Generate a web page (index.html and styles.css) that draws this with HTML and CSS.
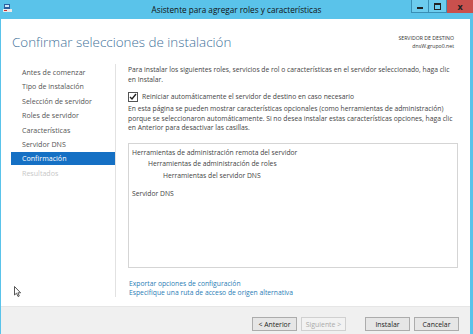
FILE: index.html
```html
<!DOCTYPE html>
<html lang="es">
<head>
    <meta charset="UTF-8">
    <title>Asistente para agregar roles y características</title>
    <link rel="stylesheet" href="styles.css">
</head>
<body>
    <div class="window">
        <div class="titlebar">
            <svg class="app-icon" width="9" height="10" viewBox="0 0 9 10">
                <rect x="1" y="1" width="6" height="6" fill="#2a5f9e"/>
                <rect x="2" y="2" width="4" height="2" fill="#cfe6f7"/>
                <rect x="0" y="6" width="9" height="3" fill="#e9e9e9"/>
                <rect x="1" y="7" width="3" height="1" fill="#c33"/>
            </svg>
            <div class="title">Asistente para agregar roles y características</div>
            <div class="controls">
                <div class="ctl ctl-min"><span></span></div>
                <div class="ctl ctl-max"><span></span></div>
                <div class="ctl ctl-close">x</div>
            </div>
        </div>

        <div class="header">
            <h1>Confirmar selecciones de instalación</h1>
            <div class="target">
                <div>SERVIDOR DE DESTINO</div>
                <div>dnsW.grupo0.net</div>
            </div>
        </div>

        <div class="main">
            <ul class="nav">
                <li>Antes de comenzar</li>
                <li>Tipo de instalación</li>
                <li>Selección de servidor</li>
                <li>Roles de servidor</li>
                <li>Características</li>
                <li>Servidor DNS</li>
                <li class="active">Confirmación</li>
                <li class="disabled">Resultados</li>
            </ul>

            <div class="content">
                <p>Para instalar los siguientes roles, servicios de rol o características en el servidor seleccionado, haga clic en Instalar.</p>
                <label class="check">
                    <span class="box-check">
                        <svg width="8" height="8" viewBox="0 0 8 8"><path d="M1 4 L3 6 L7 1" fill="none" stroke="#222" stroke-width="1.4"/></svg>
                    </span>
                    Reiniciar automáticamente el servidor de destino en caso necesario
                </label>
                <p class="note">En esta página se pueden mostrar características opcionales (como herramientas de administración) porque se seleccionaron automáticamente. Si no desea instalar estas características opciones, haga clic en Anterior para desactivar las casillas.</p>

                <div class="selection">
                    <div class="lvl0">Herramientas de administración remota del servidor</div>
                    <div class="lvl1">Herramientas de administración de roles</div>
                    <div class="lvl2">Herramientas del servidor DNS</div>
                    <div class="lvl0 gap">Servidor DNS</div>
                </div>

                <div class="links">
                    <a href="#">Exportar opciones de configuración</a>
                    <a href="#">Especifique una ruta de acceso de origen alternativa</a>
                </div>
            </div>
        </div>

        <div class="footer">
            <button>&lt; Anterior</button>
            <button disabled>Siguiente &gt;</button>
            <button class="primary">Instalar</button>
            <button>Cancelar</button>
        </div>

        <svg class="cursor" width="8" height="12" viewBox="0 0 8 12">
            <path d="M0.5 0.5 L0.5 9 L2.5 7.2 L4 10.5 L5.3 10 L3.9 6.8 L6.6 6.8 Z" fill="#fff" stroke="#444" stroke-width="0.9"/>
        </svg>
    </div>
</body>
</html>
```

FILE: styles.css
```css
body {
    margin: 0;
    width: 473px;
    height: 334px;
    overflow: hidden;
    font-family: 'Open Sans', 'Noto Sans', sans-serif;
    color: #444;
    background: #fff;
}
.window {
    position: relative;
    display: flex;
    flex-direction: column;
    height: 334px;
    box-sizing: border-box;
    border-left: 1px solid #5ac3ea;
    border-right: 3px solid #5ac3ea;
    background: #fff;
}
.titlebar {
    display: flex;
    align-items: flex-start;
    height: 19px;
    background: #5ac3ea;
    margin-left: -1px;
}
.app-icon {
    margin: 3px 0 0 3px;
}
.title {
    flex: 1;
    text-align: center;
    font-size: 8.2px;
    line-height: 19px;
    color: #111;
    padding-left: 50px;
}
.controls {
    display: flex;
    margin-right: -3px;
}
.ctl {
    height: 13px;
    box-sizing: border-box;
    display: flex;
    align-items: center;
    justify-content: center;
}
.ctl-min,
.ctl-max {
    width: 18px;
    border: 1px solid #3a8fb5;
    border-top: none;
    background: #6cccee;
}
.ctl-max {
    border-left: none;
}
.ctl-min span {
    width: 6px;
    height: 2px;
    margin-top: 3px;
    background: #222;
}
.ctl-max span {
    width: 5px;
    height: 4px;
    border: 1px solid #222;
    border-top-width: 2px;
}
.ctl-close {
    width: 26px;
    background: #c9504d;
    color: #222;
    font-size: 9px;
    font-weight: bold;
    line-height: 13px;
}
.header {
    display: flex;
    justify-content: space-between;
    align-items: flex-start;
    height: 45px;
    box-sizing: border-box;
    padding: 14px 16px 0 11px;
}
h1 {
    margin: 0;
    font-size: 13.4px;
    line-height: 18px;
    font-weight: 300;
    color: #43729a;
}
.target {
    margin-top: 1px;
    text-align: right;
    font-size: 5.2px;
    line-height: 8px;
    color: #333;
}
.main {
    display: flex;
    flex: 1;
}
.nav {
    list-style: none;
    margin: 0;
    padding: 1px 0 0;
    width: 104px;
    margin-left: 10px;
    border-right: 1px solid #e2e2e2;
    margin-bottom: 9px;
    font-size: 7.1px;
    line-height: 14.4px;
}
.nav li {
    padding-left: 11px;
    color: #555;
}
.nav li.active {
    background: #1570c4;
    color: #fff;
    line-height: 13.5px;
    margin: 0.5px 0 0.4px;
}
.nav li.disabled {
    color: #c8c8c8;
}
.content {
    flex: 1;
    padding: 1px 12px 0 12px;
    font-size: 6.75px;
    line-height: 9.5px;
    color: #444;
}
.content p {
    margin: 0;
}
.check {
    display: flex;
    align-items: center;
    gap: 4px;
    margin: 8px 0 2px;
    height: 10px;
}
.box-check {
    width: 10px;
    height: 10px;
    box-sizing: border-box;
    border: 1px solid #555;
    display: flex;
    align-items: center;
    justify-content: center;
}
.selection {
    margin-top: 10px;
    height: 125px;
    box-sizing: border-box;
    border: 1px solid #d5d5d5;
    padding: 3px 3px 0;
    line-height: 11.5px;
}
.lvl1 {
    padding-left: 16px;
}
.lvl2 {
    padding-left: 31px;
}
.gap {
    margin-top: 6.5px;
}
.links {
    display: flex;
    flex-direction: column;
    margin-top: 11px;
    padding-left: 1px;
}
.links a {
    color: #2a7db5;
    text-decoration: none;
}
.footer {
    display: flex;
    justify-content: flex-end;
    align-items: flex-start;
    height: 28px;
    box-sizing: border-box;
    padding: 10px 11px 0 0;
    background: #f0f0f0;
    border-top: 1px solid #e6e6e6;
    gap: 4px;
}
button {
    width: 45px;
    height: 14px;
    padding: 0;
    font-family: inherit;
    font-size: 6.9px;
    color: #222;
    background: #e6e6e6;
    border: 1px solid #acacac;
}
button:disabled {
    color: #aaa;
    background: #f2f2f2;
    border-color: #d0d0d0;
}
button.primary {
    margin-left: 15px;
}
.cursor {
    position: absolute;
    left: 13px;
    top: 286px;
}
```
